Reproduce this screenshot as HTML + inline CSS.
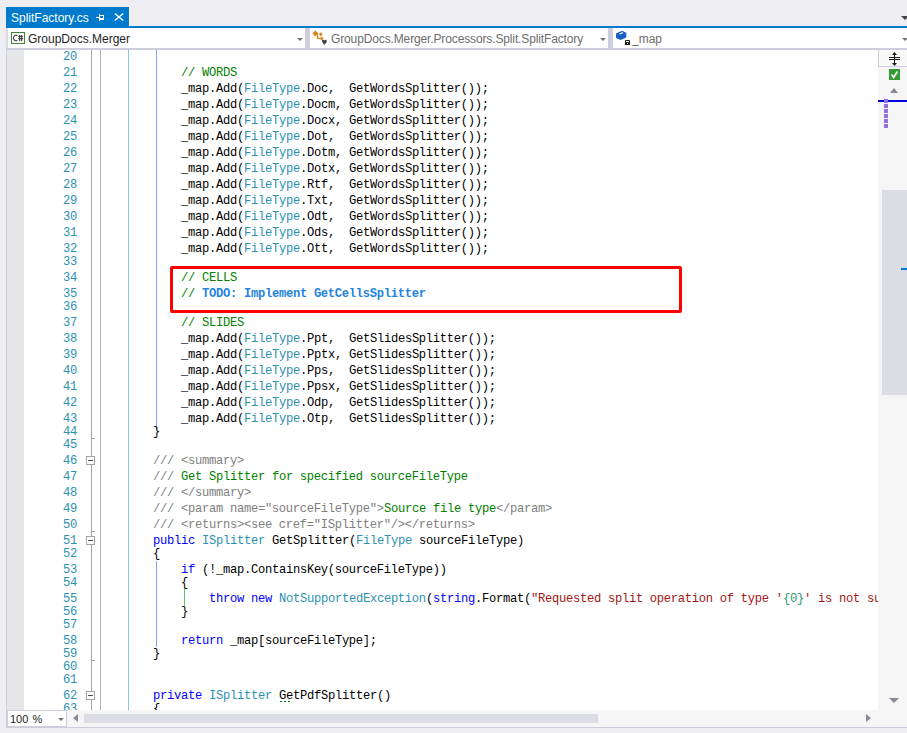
<!DOCTYPE html>
<html><head><meta charset="utf-8">
<style>
html,body{margin:0;padding:0;}
body{width:907px;height:733px;overflow:hidden;background:#eeeef2;position:relative;font-family:"Liberation Sans",sans-serif;}
.a{position:absolute;}
#tab{left:6px;top:7px;width:123px;height:19px;background:#007acc;}
#tabtxt{left:11px;top:10px;color:#fff;font-size:12px;line-height:16px;white-space:nowrap;}
#blueline{left:6px;top:26px;width:901px;height:2px;background:#007acc;}
#nav{left:6px;top:28px;width:901px;height:20px;background:#fff;}
#navb{left:6px;top:48px;width:901px;height:2px;background:#cccedb;}
#lborder{left:6px;top:28px;width:1px;height:700px;background:#cdced6;}
#lborder2{left:7px;top:50px;width:1px;height:660px;background:#e4e6ea;}
.sep{top:28px;width:5px;height:20px;background:#cccedb;}
.dd{width:0;height:0;border-left:3px solid transparent;border-right:3px solid transparent;border-top:3px solid #717171;}
.navt{top:31px;font-size:12px;line-height:16px;white-space:nowrap;}
#editor{left:8px;top:50px;width:870px;height:660px;background:#fff;overflow:hidden;}
#glyph{left:8px;top:50px;width:16px;height:660px;background:#e6e7e8;}
.ln{position:absolute;left:63px;width:14px;text-align:right;font-family:"Liberation Mono",monospace;font-size:12.14px;letter-spacing:-0.284px;line-height:16px;color:#2b91af;white-space:pre;}
.cd{position:absolute;font-family:"Liberation Mono",monospace;font-size:12.14px;letter-spacing:-0.284px;line-height:16px;white-space:pre;}
.b{font-weight:bold;}
.vl{position:absolute;width:1px;}
.obox{position:absolute;left:86px;width:7px;height:7px;border:1px solid #a5a5a5;background:#fff;}
.obox:after{content:"";position:absolute;left:1px;top:3px;width:5px;height:1px;background:#505050;}
#clip{position:absolute;left:0;top:0;width:878px;height:710px;overflow:hidden;}
#vscroll{left:878px;top:50px;width:29px;height:660px;background:#f5f5f5;}
#hbar{left:8px;top:710px;width:899px;height:18px;background:#f5f5f5;}
</style></head><body>
<div class="a" id="tab"></div>
<div class="a" id="tabtxt">SplitFactory.cs</div>
<!-- pin icon -->
<div class="a" style="left:96px;top:17px;width:3px;height:1px;background:#fff"></div>
<div class="a" style="left:99px;top:14px;width:1px;height:7px;background:#fff"></div>
<div class="a" style="left:100px;top:15px;width:4px;height:1px;background:#fff"></div>
<div class="a" style="left:103px;top:15px;width:1px;height:5px;background:#fff"></div>
<div class="a" style="left:100px;top:18px;width:4px;height:2px;background:#fff"></div>
<!-- close icon -->
<svg class="a" style="left:112px;top:11px" width="14" height="12" viewBox="0 0 14 12">
  <path d="M2.8 2.5L11.2 9.5M11.2 2.5L2.8 9.5" stroke="#fff" stroke-width="1.3" fill="none"/>
</svg>
<div class="a" id="blueline"></div>
<div class="a" style="left:901px;top:16px;width:0;height:0;border-left:4px solid transparent;border-right:4px solid transparent;border-top:4px solid #444"></div>
<div class="a" id="nav"></div>
<div class="a" id="navb"></div>
<!-- C# icon -->
<div class="a" style="left:11px;top:32px;width:12px;height:10px;border:1px solid #388a34;background:#fff;"></div>
<svg class="a" style="left:8px;top:29px" width="20" height="18" viewBox="0 0 20 18">
  <path d="M9.3 6.9A2.3 2.8 0 1 0 9.3 11.1" stroke="#424242" stroke-width="1.15" fill="none"/>
  <path d="M11.6 6V12.2M13.6 6V12.2M10.2 7.5H15.1M10.2 9.6H15.1" stroke="#424242" stroke-width="1.1" fill="none"/>
</svg>
<div class="a navt" style="left:28px;color:#1e1e1e">GroupDocs.Merger</div>
<div class="a dd" style="left:297px;top:38px"></div>
<div class="a sep" style="left:305px"></div>
<!-- class icon -->
<svg class="a" style="left:308px;top:28px" width="24" height="20" viewBox="0 0 24 20">
  <path d="M4.4 5.5L7.4 2.5L10.4 5.5L7.4 8.5Z M10.8 6.3L12.8 4.3L14.8 6.3L12.8 8.3Z M11.6 10.4L13.6 8.4L15.6 10.4L13.6 12.4Z" fill="#d9861a"/>
  <path d="M9.5 5.5V10.3H12.5" stroke="#d9861a" stroke-width="1.3" fill="none"/>
  <path d="M14 13C14 11.5 15.8 11.3 16.4 12.5C17 11.3 18.8 11.5 18.8 13C18.8 14.6 16.4 16.8 16.4 16.8C16.4 16.8 14 14.6 14 13Z" fill="#424242"/>
</svg>
<div class="a navt" style="left:331px;color:#6d6d6d;letter-spacing:-0.13px">GroupDocs.Merger.Processors.Split.SplitFactory</div>
<div class="a dd" style="left:600px;top:38px"></div>
<div class="a sep" style="left:608px"></div>
<!-- field icon -->
<svg class="a" style="left:610px;top:28px" width="24" height="20" viewBox="0 0 24 20">
  <path d="M6 5.5L12 2.8L16.3 4.8V9.5L10.5 12L6 10Z" fill="#1760c4"/>
  <path d="M9 5.6L12.3 4.2L13.6 5L10.3 6.4Z" fill="#fff"/>
  <rect x="15" y="14" width="5" height="3" fill="#1e1e1e"/>
  <path d="M15.5 14V12.5H19.5V14" stroke="#1e1e1e" stroke-width="1" fill="none"/>
  <rect x="17" y="15" width="1" height="1" fill="#fff"/>
</svg>
<div class="a navt" style="left:632px;color:#6d6d6d">_map</div>
<div class="a dd" style="left:902px;top:38px"></div>

<div class="a" id="lborder"></div>
<div class="a" id="editor"></div>
<div class="a" id="glyph"></div>
<div class="a" id="lborder2"></div>
<div class="a" style="left:6px;top:28px;width:2px;height:20px;background:#d9dae3"></div>
<div id="clip">
<!-- outlining line -->
<div class="vl" style="left:91px;top:50px;height:406px;background:#a5a5a5"></div>
<div class="a" style="left:91px;top:438px;width:4px;height:1px;background:#a5a5a5"></div>
<div class="vl" style="left:91px;top:465px;height:71px;background:#a5a5a5"></div>
<div class="a" style="left:91px;top:531px;width:4px;height:1px;background:#a5a5a5"></div>
<div class="vl" style="left:91px;top:545px;height:146px;background:#a5a5a5"></div>
<div class="a" style="left:91px;top:660px;width:4px;height:1px;background:#a5a5a5"></div>
<div class="vl" style="left:91px;top:700px;height:10px;background:#a5a5a5"></div>
<div class="obox" style="top:456px"></div>
<div class="obox" style="top:536px"></div>
<div class="obox" style="top:691px"></div>
<!-- guides -->
<div class="vl" style="left:100px;top:50px;height:660px;background:#b4b4b4"></div>
<div class="vl" style="left:128px;top:50px;height:660px;background:#7fcbe0"></div>
<div class="vl" style="left:156px;top:50px;height:380px;background:#8a9cff"></div>
<div class="vl" style="left:156px;top:561px;height:86px;background:#8a9cff"></div>
<div class="vl" style="left:184px;top:589px;height:17px;background:#6cc06c"></div>
<div class="ln" style="top:48.77px">20</div>
<div class="ln" style="top:64.77px">21</div>
<div class="cd" style="top:64.77px;left:181.00px;color:#008000">// WORDS</div>
<div class="ln" style="top:80.77px">22</div>
<div class="cd" style="top:80.77px;left:181.00px;color:#000000">_map.Add(</div>
<div class="cd" style="top:80.77px;left:244.00px;color:#2b91af">FileType</div>
<div class="cd" style="top:80.77px;left:300.00px;color:#000000">.Doc,  GetWordsSplitter());</div>
<div class="ln" style="top:96.77px">23</div>
<div class="cd" style="top:96.77px;left:181.00px;color:#000000">_map.Add(</div>
<div class="cd" style="top:96.77px;left:244.00px;color:#2b91af">FileType</div>
<div class="cd" style="top:96.77px;left:300.00px;color:#000000">.Docm, GetWordsSplitter());</div>
<div class="ln" style="top:112.77px">24</div>
<div class="cd" style="top:112.77px;left:181.00px;color:#000000">_map.Add(</div>
<div class="cd" style="top:112.77px;left:244.00px;color:#2b91af">FileType</div>
<div class="cd" style="top:112.77px;left:300.00px;color:#000000">.Docx, GetWordsSplitter());</div>
<div class="ln" style="top:128.77px">25</div>
<div class="cd" style="top:128.77px;left:181.00px;color:#000000">_map.Add(</div>
<div class="cd" style="top:128.77px;left:244.00px;color:#2b91af">FileType</div>
<div class="cd" style="top:128.77px;left:300.00px;color:#000000">.Dot,  GetWordsSplitter());</div>
<div class="ln" style="top:144.77px">26</div>
<div class="cd" style="top:144.77px;left:181.00px;color:#000000">_map.Add(</div>
<div class="cd" style="top:144.77px;left:244.00px;color:#2b91af">FileType</div>
<div class="cd" style="top:144.77px;left:300.00px;color:#000000">.Dotm, GetWordsSplitter());</div>
<div class="ln" style="top:160.77px">27</div>
<div class="cd" style="top:160.77px;left:181.00px;color:#000000">_map.Add(</div>
<div class="cd" style="top:160.77px;left:244.00px;color:#2b91af">FileType</div>
<div class="cd" style="top:160.77px;left:300.00px;color:#000000">.Dotx, GetWordsSplitter());</div>
<div class="ln" style="top:176.77px">28</div>
<div class="cd" style="top:176.77px;left:181.00px;color:#000000">_map.Add(</div>
<div class="cd" style="top:176.77px;left:244.00px;color:#2b91af">FileType</div>
<div class="cd" style="top:176.77px;left:300.00px;color:#000000">.Rtf,  GetWordsSplitter());</div>
<div class="ln" style="top:192.77px">29</div>
<div class="cd" style="top:192.77px;left:181.00px;color:#000000">_map.Add(</div>
<div class="cd" style="top:192.77px;left:244.00px;color:#2b91af">FileType</div>
<div class="cd" style="top:192.77px;left:300.00px;color:#000000">.Txt,  GetWordsSplitter());</div>
<div class="ln" style="top:208.77px">30</div>
<div class="cd" style="top:208.77px;left:181.00px;color:#000000">_map.Add(</div>
<div class="cd" style="top:208.77px;left:244.00px;color:#2b91af">FileType</div>
<div class="cd" style="top:208.77px;left:300.00px;color:#000000">.Odt,  GetWordsSplitter());</div>
<div class="ln" style="top:224.77px">31</div>
<div class="cd" style="top:224.77px;left:181.00px;color:#000000">_map.Add(</div>
<div class="cd" style="top:224.77px;left:244.00px;color:#2b91af">FileType</div>
<div class="cd" style="top:224.77px;left:300.00px;color:#000000">.Ods,  GetWordsSplitter());</div>
<div class="ln" style="top:240.77px">32</div>
<div class="cd" style="top:240.77px;left:181.00px;color:#000000">_map.Add(</div>
<div class="cd" style="top:240.77px;left:244.00px;color:#2b91af">FileType</div>
<div class="cd" style="top:240.77px;left:300.00px;color:#000000">.Ott,  GetWordsSplitter());</div>
<div class="ln" style="top:253.77px">33</div>
<div class="ln" style="top:269.77px">34</div>
<div class="cd" style="top:269.77px;left:181.00px;color:#008000">// CELLS</div>
<div class="ln" style="top:285.77px">35</div>
<div class="cd" style="top:285.77px;left:181.00px;color:#008000">// </div>
<div class="cd b" style="top:285.77px;left:202.00px;color:#1f84de">TODO: Implement GetCellsSplitter</div>
<div class="ln" style="top:298.77px">36</div>
<div class="ln" style="top:314.77px">37</div>
<div class="cd" style="top:314.77px;left:181.00px;color:#008000">// SLIDES</div>
<div class="ln" style="top:330.77px">38</div>
<div class="cd" style="top:330.77px;left:181.00px;color:#000000">_map.Add(</div>
<div class="cd" style="top:330.77px;left:244.00px;color:#2b91af">FileType</div>
<div class="cd" style="top:330.77px;left:300.00px;color:#000000">.Ppt,  GetSlidesSplitter());</div>
<div class="ln" style="top:346.77px">39</div>
<div class="cd" style="top:346.77px;left:181.00px;color:#000000">_map.Add(</div>
<div class="cd" style="top:346.77px;left:244.00px;color:#2b91af">FileType</div>
<div class="cd" style="top:346.77px;left:300.00px;color:#000000">.Pptx, GetSlidesSplitter());</div>
<div class="ln" style="top:362.77px">40</div>
<div class="cd" style="top:362.77px;left:181.00px;color:#000000">_map.Add(</div>
<div class="cd" style="top:362.77px;left:244.00px;color:#2b91af">FileType</div>
<div class="cd" style="top:362.77px;left:300.00px;color:#000000">.Pps,  GetSlidesSplitter());</div>
<div class="ln" style="top:378.77px">41</div>
<div class="cd" style="top:378.77px;left:181.00px;color:#000000">_map.Add(</div>
<div class="cd" style="top:378.77px;left:244.00px;color:#2b91af">FileType</div>
<div class="cd" style="top:378.77px;left:300.00px;color:#000000">.Ppsx, GetSlidesSplitter());</div>
<div class="ln" style="top:394.77px">42</div>
<div class="cd" style="top:394.77px;left:181.00px;color:#000000">_map.Add(</div>
<div class="cd" style="top:394.77px;left:244.00px;color:#2b91af">FileType</div>
<div class="cd" style="top:394.77px;left:300.00px;color:#000000">.Odp,  GetSlidesSplitter());</div>
<div class="ln" style="top:410.77px">43</div>
<div class="cd" style="top:410.77px;left:181.00px;color:#000000">_map.Add(</div>
<div class="cd" style="top:410.77px;left:244.00px;color:#2b91af">FileType</div>
<div class="cd" style="top:410.77px;left:300.00px;color:#000000">.Otp,  GetSlidesSplitter());</div>
<div class="ln" style="top:423.77px">44</div>
<div class="cd" style="top:423.77px;left:153.00px;color:#000000">}</div>
<div class="ln" style="top:436.77px">45</div>
<div class="ln" style="top:452.77px">46</div>
<div class="cd" style="top:452.77px;left:153.00px;color:#808080">/// &lt;summary&gt;</div>
<div class="ln" style="top:468.77px">47</div>
<div class="cd" style="top:468.77px;left:153.00px;color:#808080">/// </div>
<div class="cd" style="top:468.77px;left:181.00px;color:#008000">Get Splitter for specified sourceFileType</div>
<div class="ln" style="top:484.77px">48</div>
<div class="cd" style="top:484.77px;left:153.00px;color:#808080">/// &lt;/summary&gt;</div>
<div class="ln" style="top:500.77px">49</div>
<div class="cd" style="top:500.77px;left:153.00px;color:#808080">/// &lt;param name=&quot;sourceFileType&quot;&gt;</div>
<div class="cd" style="top:500.77px;left:384.00px;color:#008000">Source file type</div>
<div class="cd" style="top:500.77px;left:496.00px;color:#808080">&lt;/param&gt;</div>
<div class="ln" style="top:516.77px">50</div>
<div class="cd" style="top:516.77px;left:153.00px;color:#808080">/// &lt;returns&gt;&lt;see cref=&quot;ISplitter&quot;/&gt;&lt;/returns&gt;</div>
<div class="ln" style="top:532.77px">51</div>
<div class="cd" style="top:532.77px;left:153.00px;color:#0000ff">public</div>
<div class="cd" style="top:532.77px;left:202.00px;color:#2b91af">ISplitter</div>
<div class="cd" style="top:532.77px;left:272.00px;color:#000000">GetSplitter(</div>
<div class="cd" style="top:532.77px;left:356.00px;color:#2b91af">FileType</div>
<div class="cd" style="top:532.77px;left:419.00px;color:#000000">sourceFileType)</div>
<div class="ln" style="top:545.77px">52</div>
<div class="cd" style="top:545.77px;left:153.00px;color:#000000">{</div>
<div class="ln" style="top:561.77px">53</div>
<div class="cd" style="top:561.77px;left:181.00px;color:#0000ff">if</div>
<div class="cd" style="top:561.77px;left:202.00px;color:#000000">(!_map.ContainsKey(sourceFileType))</div>
<div class="ln" style="top:574.77px">54</div>
<div class="cd" style="top:574.77px;left:181.00px;color:#000000">{</div>
<div class="ln" style="top:590.77px">55</div>
<div class="cd" style="top:590.77px;left:209.00px;color:#0000ff">throw</div>
<div class="cd" style="top:590.77px;left:251.00px;color:#0000ff">new</div>
<div class="cd" style="top:590.77px;left:279.00px;color:#2b91af">NotSupportedException</div>
<div class="cd" style="top:590.77px;left:426.00px;color:#000000">(</div>
<div class="cd" style="top:590.77px;left:433.00px;color:#0000ff">string</div>
<div class="cd" style="top:590.77px;left:475.00px;color:#000000">.Format(</div>
<div class="cd" style="top:590.77px;left:531.00px;color:#a31515">&quot;Requested split operation of type &#x27;</div>
<div class="cd" style="top:590.77px;left:783.00px;color:#2a9a74">{0}</div>
<div class="cd" style="top:590.77px;left:804.00px;color:#a31515">&#x27; is not supported&quot;</div>
<div class="cd" style="top:590.77px;left:937.00px;color:#000000">)</div>
<div class="ln" style="top:603.77px">56</div>
<div class="cd" style="top:603.77px;left:181.00px;color:#000000">}</div>
<div class="ln" style="top:616.77px">57</div>
<div class="ln" style="top:632.77px">58</div>
<div class="cd" style="top:632.77px;left:181.00px;color:#0000ff">return</div>
<div class="cd" style="top:632.77px;left:230.00px;color:#000000">_map[sourceFileType];</div>
<div class="ln" style="top:645.77px">59</div>
<div class="cd" style="top:645.77px;left:153.00px;color:#000000">}</div>
<div class="ln" style="top:658.77px">60</div>
<div class="ln" style="top:671.77px">61</div>
<div class="ln" style="top:687.77px">62</div>
<div class="cd" style="top:687.77px;left:153.00px;color:#0000ff">private</div>
<div class="cd" style="top:687.77px;left:209.00px;color:#2b91af">ISplitter</div>
<div class="cd" style="top:687.77px;left:279.00px;color:#000000">GetPdfSplitter()</div>
<div class="ln" style="top:700.77px">63</div>
<div class="cd" style="top:700.77px;left:153.00px;color:#000000">{</div>
<div class="a" style="left:280px;top:701px;width:2px;height:1px;background:#008000"></div>
<div class="a" style="left:284px;top:701px;width:2px;height:1px;background:#008000"></div>
<div class="a" style="left:288px;top:701px;width:2px;height:1px;background:#008000"></div>
<!-- red box -->
<div class="a" style="left:170px;top:266px;width:506px;height:41px;border:3px solid #ff0000;border-radius:2px"></div>
</div>

<!-- vertical scrollbar -->
<div class="a" id="vscroll"></div>
<div class="a" style="left:878px;top:50px;width:29px;height:17px;background:#f9f9fa;border-bottom:1px solid #cccedb;border-left:1px solid #cccedb;box-sizing:border-box"></div>
<svg class="a" style="left:878px;top:50px" width="29" height="17" viewBox="0 0 29 17">
  <path d="M11 7.5H22M11 9.5H22M16.5 3V15" stroke="#1e1e1e" stroke-width="1.1" fill="none"/>
  <path d="M14 5L16.5 2L19 5Z M14 13L16.5 16L19 13Z" fill="#1e1e1e"/>
</svg>
<div class="a" style="left:889px;top:69px;width:11px;height:11px;background:#339933"></div>
<svg class="a" style="left:889px;top:69px" width="11" height="11" viewBox="0 0 11 11">
  <path d="M2.6 5.6L4.6 8.4L8.4 2.4" stroke="#fff" stroke-width="1.8" fill="none"/>
</svg>
<div class="a" style="left:890px;top:88px;width:0;height:0;border-left:4.5px solid transparent;border-right:4.5px solid transparent;border-bottom:5px solid #868999"></div>
<div class="a" style="left:878px;top:100px;width:29px;height:2px;background:#0000e0"></div>
<div class="a" style="left:884px;top:99px;width:4px;height:4px;background:#9370db"></div>
<div class="a" style="left:884px;top:104px;width:4px;height:4px;background:#9370db"></div>
<div class="a" style="left:884px;top:109px;width:4px;height:4px;background:#9370db"></div>
<div class="a" style="left:884px;top:114px;width:4px;height:4px;background:#9370db"></div>
<div class="a" style="left:884px;top:119px;width:4px;height:4px;background:#9370db"></div>
<div class="a" style="left:884px;top:124px;width:4px;height:4px;background:#9370db"></div>
<div class="a" style="left:882px;top:190px;width:25px;height:205px;background:#dcdce4"></div>
<div class="a" style="left:901px;top:268px;width:6px;height:2px;background:#007acc"></div>
<div class="a" style="left:889px;top:698px;width:0;height:0;border-left:5px solid transparent;border-right:5px solid transparent;border-top:5px solid #868999"></div>

<!-- bottom bar -->
<div class="a" id="hbar"></div>
<div class="a" style="left:6px;top:727px;width:901px;height:1px;background:#cccedb"></div>
<div class="a" style="left:7px;top:710px;width:58px;height:15px;background:#fff;border:1px solid #cccedb"></div>
<div class="a" style="left:10px;top:713px;font-size:11px;line-height:12px;color:#1e1e1e;word-spacing:1px">100 %</div>
<div class="a dd" style="left:58px;top:718px"></div>
<div class="a" style="left:73px;top:714px;width:0;height:0;border-top:4.5px solid transparent;border-bottom:4.5px solid transparent;border-right:5px solid #868999"></div>
<div class="a" style="left:84px;top:714px;width:514px;height:9px;background:#dcdce4"></div>
<div class="a" style="left:866px;top:714px;width:0;height:0;border-top:4.5px solid transparent;border-bottom:4.5px solid transparent;border-left:5px solid #868999"></div>
</body></html>
